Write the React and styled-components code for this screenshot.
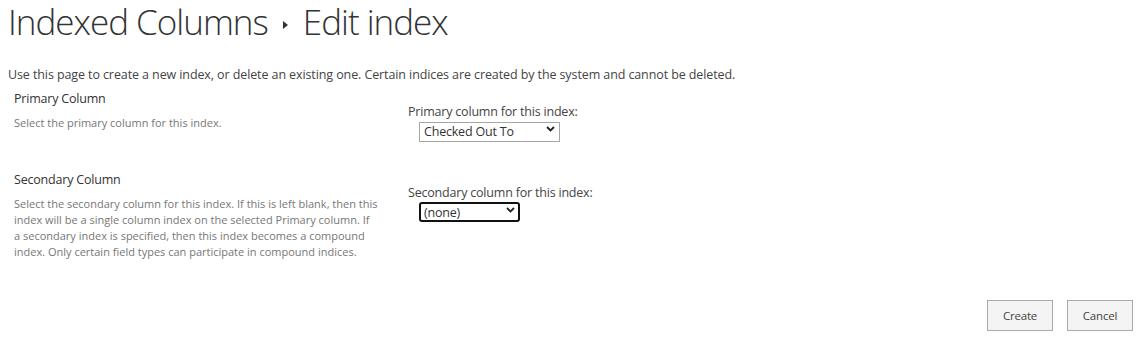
import React from "react";
import styled, { createGlobalStyle } from "styled-components";

const Global = createGlobalStyle`
  html, body { margin: 0; padding: 0; background: #fff; }
  body { font-family: "Open Sans", "Noto Sans", sans-serif; color: #444; }
  * { box-sizing: border-box; }
`;

const Page = styled.div`
  width: 1143px;
  height: 352px;
  padding: 0 10px 0 8px;
  display: flex;
  flex-direction: column;
`;

const Title = styled.h1`
  margin: 0;
  font-size: 35px;
  font-weight: 300;
  line-height: 44px;
  color: #333;
  display: flex;
  align-items: center;
  letter-spacing: -1px;
  white-space: nowrap;
`;

const Crumb = styled.span``;

const Sep = styled.span`
  display: inline-flex;
  align-items: center;
  margin: 6px 15px 0 15px;
`;

const Intro = styled.p`
  margin: 23px 0 0 0;
  font-size: 12.5px;
  line-height: 16px;
  color: #444;
  letter-spacing: -0.1px;
`;

const Section = styled.div`
  display: grid;
  grid-template-columns: 400px 1fr;
  margin-top: ${(p) => p.$top}px;
`;

const Left = styled.div`
  padding-left: 6px;
`;

const SecTitle = styled.div`
  font-size: 12.5px;
  line-height: 16px;
  color: #333;
  letter-spacing: -0.2px;
`;

const SecDesc = styled.div`
  margin-top: 8px;
  font-size: 11px;
  line-height: 16px;
  color: #777;
  white-space: nowrap;
`;

const Right = styled.div`
  padding-top: ${(p) => p.$top}px;
`;

const FieldLabel = styled.div`
  font-size: 12.5px;
  line-height: 14px;
  color: #444;
  letter-spacing: -0.2px;
`;

const SelectWrap = styled.div`
  position: relative;
  margin: 0 0 0 11px;
  width: ${(p) => p.$w}px;
  height: 20px;
`;

const Select = styled.select`
  appearance: none;
  -webkit-appearance: none;
  width: 100%;
  height: 100%;
  margin: 0;
  padding: 0 0 0 ${(p) => (p.$focus ? 3 : 4)}px;
  font-family: "Open Sans", "Noto Sans", sans-serif;
  font-size: 12.5px;
  letter-spacing: -0.2px;
  color: #333;
  background: #fff;
  border: ${(p) => (p.$focus ? "2px solid #111" : "1px solid #a6a6a6")};
  border-radius: ${(p) => (p.$focus ? "3px" : "0")};
  outline: none;
`;

const Chevron = styled.svg`
  position: absolute;
  right: 5px;
  top: 7px;
  pointer-events: none;
`;

const Buttons = styled.div`
  margin-top: auto;
  margin-bottom: 21px;
  display: flex;
  justify-content: flex-end;
  gap: 14px;
`;

const Button = styled.button`
  width: 66px;
  height: 31px;
  background: #f4f4f4;
  border: 1px solid #ababab;
  font-family: "Open Sans", "Noto Sans", sans-serif;
  font-size: 11.5px;
  color: #444;
  letter-spacing: -0.2px;
  padding: 0;
`;

const ChevronIcon = () => (
  <Chevron width="9" height="6" viewBox="0 0 9 6">
    <path d="M1 1 L4.5 4.5 L8 1" fill="none" stroke="#222" strokeWidth="1.8" />
  </Chevron>
);

export default function App() {
  return (
    <>
      <Global />
      <Page>
        <Title>
          <Crumb>Indexed Columns</Crumb>
          <Sep>
            <svg width="5" height="8" viewBox="0 0 5 8">
              <path d="M0 0 L5 4 L0 8 Z" fill="#333" />
            </svg>
          </Sep>
          <Crumb>Edit index</Crumb>
        </Title>
        <Intro>
          Use this page to create a new index, or delete an existing one. Certain indices are created by the system and cannot be deleted.
        </Intro>
        <Section $top={8}>
          <Left>
            <SecTitle>Primary Column</SecTitle>
            <SecDesc>Select the primary column for this index.</SecDesc>
          </Left>
          <Right $top={14}>
            <FieldLabel>Primary column for this index:</FieldLabel>
            <SelectWrap $w={141}>
              <Select defaultValue="co">
                <option value="co">Checked Out To</option>
              </Select>
              <ChevronIcon />
            </SelectWrap>
          </Right>
        </Section>
        <Section $top={33}>
          <Left>
            <SecTitle>Secondary Column</SecTitle>
            <SecDesc>
              Select the secondary column for this index. If this is left blank, then this
              <br />
              index will be a single column index on the selected Primary column. If
              <br />
              a secondary index is specified, then this index becomes a compound
              <br />
              index. Only certain field types can participate in compound indices.
            </SecDesc>
          </Left>
          <Right $top={14}>
            <FieldLabel>Secondary column for this index:</FieldLabel>
            <SelectWrap $w={101}>
              <Select $focus defaultValue="none">
                <option value="none">(none)</option>
              </Select>
              <ChevronIcon />
            </SelectWrap>
          </Right>
        </Section>
        <Buttons>
          <Button>Create</Button>
          <Button>Cancel</Button>
        </Buttons>
      </Page>
    </>
  );
}
